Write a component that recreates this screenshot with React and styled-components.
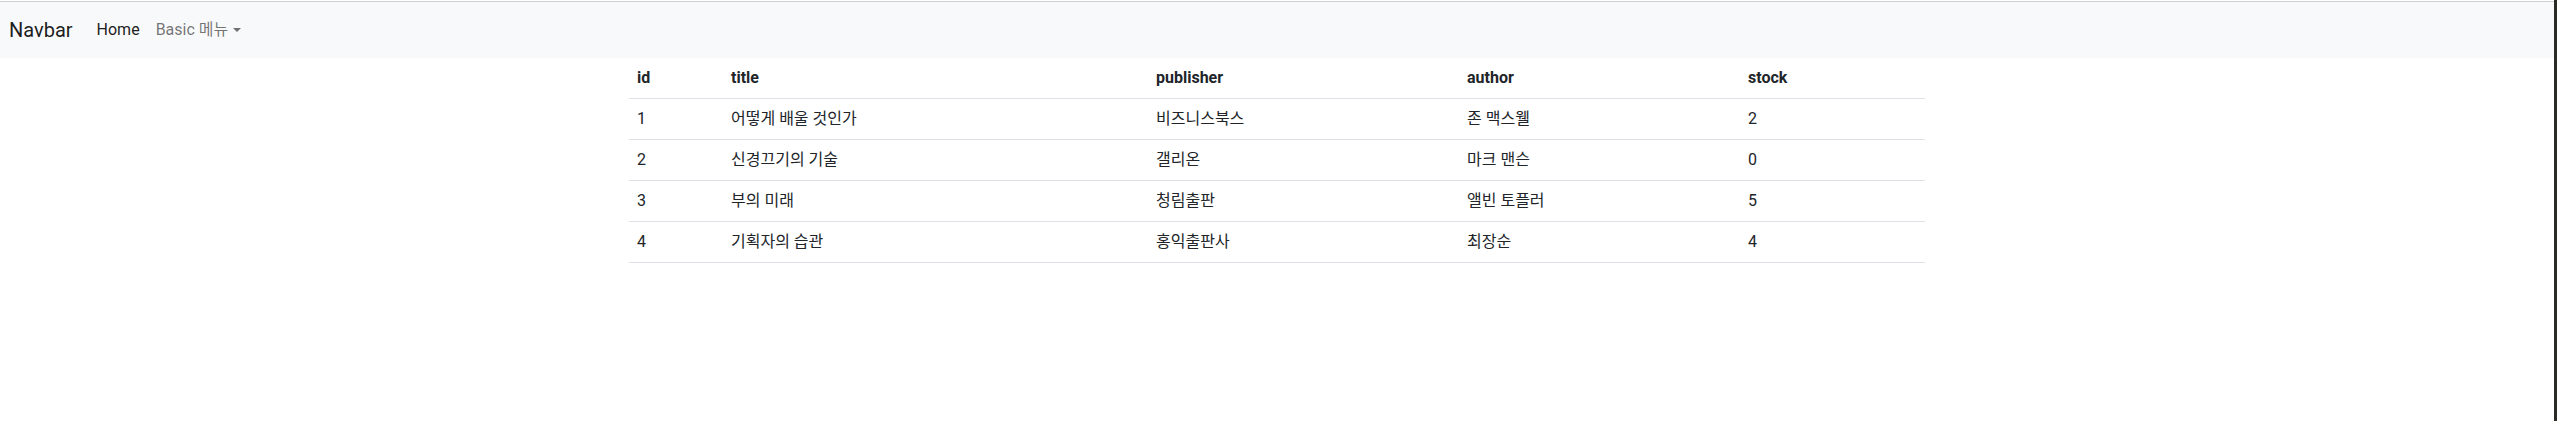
import React from 'react';
import styled, { createGlobalStyle } from 'styled-components';

const GlobalStyle = createGlobalStyle`
  html, body {
    margin: 0;
    padding: 0;
    background: #fff;
  }
  body {
    padding-top: 1px;
    border-right: 3px solid #2a2a26;
    min-height: 421px;
    box-sizing: border-box;
    font-family: Roboto, "Noto Sans CJK KR", sans-serif;
    font-size: 16px;
    line-height: 1.5;
    color: #212529;
  }
`;

const books = [
    { id: 1, title: '어떻게 배울 것인가', publisher: '비즈니스북스', author: '존 맥스웰', stock: 2 },
    { id: 2, title: '신경끄기의 기술', publisher: '갤리온', author: '마크 맨슨', stock: 0 },
    { id: 3, title: '부의 미래', publisher: '청림출판', author: '앨빈 토플러', stock: 5 },
    { id: 4, title: '기획자의 습관', publisher: '홍익출판사', author: '최장순', stock: 4 },
];

const columns = [
    { key: 'id', width: 94 },
    { key: 'title', width: 425 },
    { key: 'publisher', width: 311 },
    { key: 'author', width: 281 },
    { key: 'stock', width: 185 },
];

export default function App() {
    return (
        <>
            <GlobalStyle />
            <Navbar>
                <Brand href="#">Navbar</Brand>
                <NavList>
                    <NavLink href="#" active>Home</NavLink>
                    <NavLink href="#">
                        Basic 메뉴
                        <Caret />
                    </NavLink>
                </NavList>
            </Navbar>
            <Container>
                <Table>
                    <colgroup>
                        {columns.map((c) => (
                            <col key={c.key} width={c.width} />
                        ))}
                    </colgroup>
                    <thead>
                        <tr>
                            {columns.map((c) => (
                                <Th key={c.key}>{c.key}</Th>
                            ))}
                        </tr>
                    </thead>
                    <tbody>
                        {books.map((b) => (
                            <tr key={b.id}>
                                {columns.map((c) => (
                                    <Td key={c.key}>{b[c.key]}</Td>
                                ))}
                            </tr>
                        ))}
                    </tbody>
                </Table>
            </Container>
        </>
    );
}

const Navbar = styled.nav`
  display: flex;
  align-items: center;
  height: 56px;
  padding: 0 9px;
  background: #f8f9fa;
  border-top: 1px solid #cfd0d2;
`;

const Brand = styled.a`
  font-size: 20px;
  line-height: 30px;
  padding: 5px 0;
  margin-right: 16px;
  color: rgba(0, 0, 0, 0.9);
  text-decoration: none;
`;

const NavList = styled.div`
  display: flex;
  align-items: center;
`;

const NavLink = styled.a`
  display: flex;
  align-items: center;
  padding: 8px;
  font-size: 16px;
  line-height: 24px;
  text-decoration: none;
  color: ${(p) => (p.active ? 'rgba(0, 0, 0, 0.9)' : 'rgba(0, 0, 0, 0.55)')};
`;

const Caret = styled.span`
  display: inline-block;
  margin-left: 0.3em;
  width: 0;
  height: 0;
  border-top: 0.3em solid currentColor;
  border-left: 0.3em solid transparent;
  border-right: 0.3em solid transparent;
`;

const Container = styled.div`
  max-width: 1296px;
  margin: 0 auto;
  padding: 0 12px;
`;

const Table = styled.table`
  width: 100%;
  border-collapse: collapse;
  table-layout: fixed;
  margin-bottom: 16px;
`;

const Th = styled.th`
  text-align: left;
  font-weight: 700;
  padding: 8px;
  border-bottom: 1px solid #dee2e6;
`;

const Td = styled.td`
  padding: 8px;
  border-bottom: 1px solid #dee2e6;
`;
